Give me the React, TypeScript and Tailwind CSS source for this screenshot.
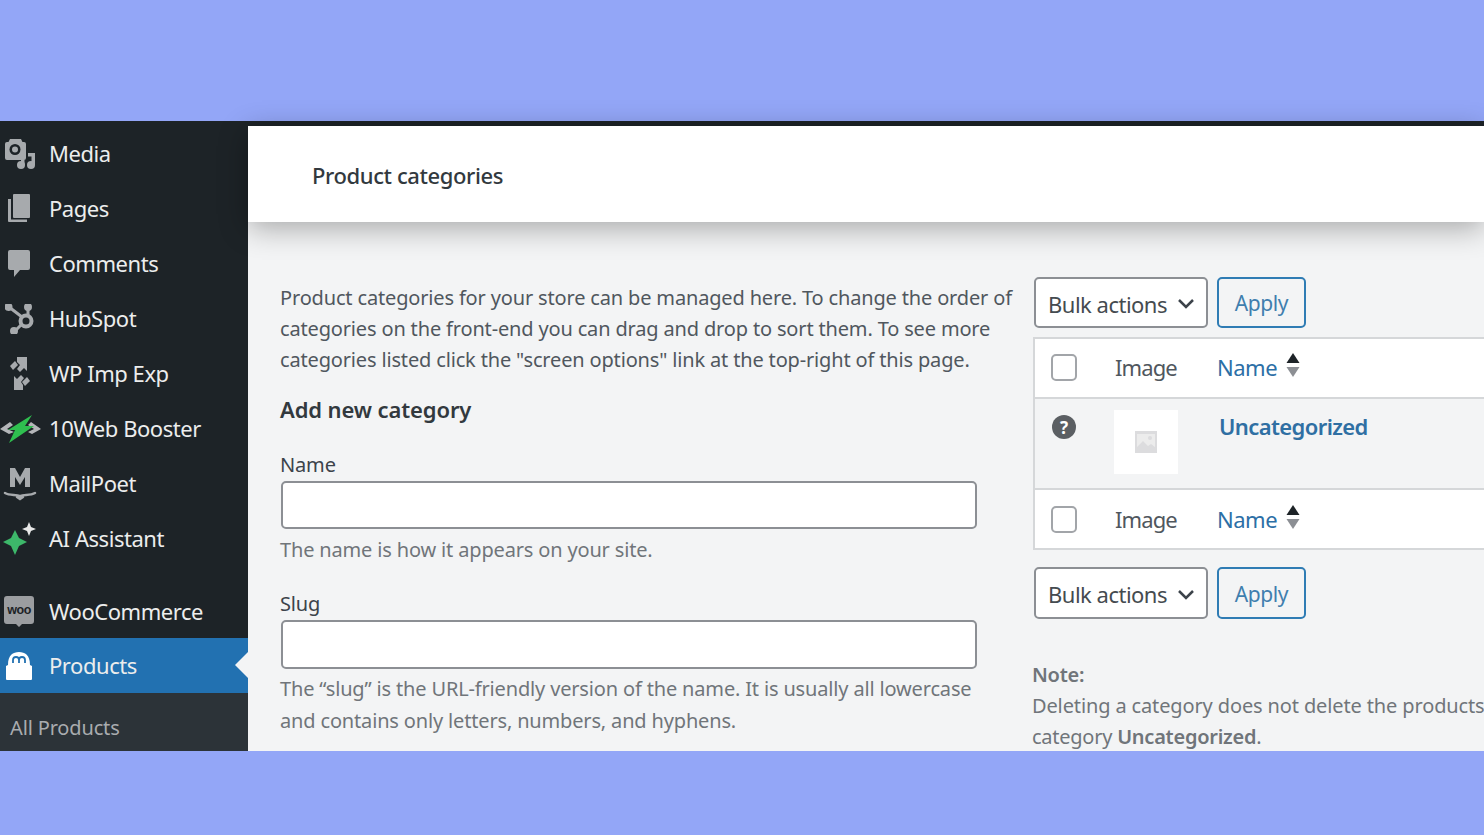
const font = "font-['Noto_Sans','Open_Sans',sans-serif]";

function MediaIcon() {
  return (
    <svg width="32" height="32" viewBox="0 0 32 32" fill="#a7aaad">
      <path d="M6 1h11l1.500 3H20a2 2 0 0 1 2 2v14a2 2 0 0 1-2 2H3a2 2 0 0 1-2-2V6a2 2 0 0 1 2-2h1.500z" />
      <circle cx="11" cy="11.500" r="5.500" fill="#1d2327" />
      <circle cx="11" cy="11.500" r="3" />
      <path d="M24 15h7v12h-3.500v-8.500H24z" />
      <circle cx="27" cy="27" r="4" />
      <path d="M17 22h3.500v5H17z" />
      <circle cx="17" cy="27" r="4" />
    </svg>
  );
}

function PagesIcon() {
  return (
    <svg width="24" height="30" viewBox="0 0 24 30" fill="#a7aaad">
      <rect x="5" y="0" width="17" height="24" rx="1" />
      <path d="M0 5h3v20.500h16V28H1a1 1 0 0 1-1-1z" />
    </svg>
  );
}

function CommentsIcon() {
  return (
    <svg width="22" height="27" viewBox="0 0 22 27" fill="#a7aaad">
      <path d="M2 0h18a2 2 0 0 1 2 2v16a2 2 0 0 1-2 2h-8l-6 7v-7H2a2 2 0 0 1-2-2V2a2 2 0 0 1 2-2z" />
    </svg>
  );
}

function HubSpotIcon() {
  return (
    <svg width="32" height="30" viewBox="0 0 32 30" fill="none" stroke="#a7aaad" strokeWidth="3">
      <circle cx="21" cy="17" r="5.500" strokeWidth="4" />
      <path d="M4 3l13 10M23 3v8M16 21l-6 6" />
      <circle cx="3.500" cy="3" r="2.500" fill="#a7aaad" />
      <circle cx="23" cy="3" r="2.500" fill="#a7aaad" />
      <circle cx="9" cy="27" r="2.500" fill="#a7aaad" />
    </svg>
  );
}

function ImpExpIcon() {
  return (
    <svg width="20" height="37" viewBox="0 0 20 37" fill="#a7aaad">
      <path d="M7 2h10v14l-3-3-4 4-3-3 3-4-3-3z" />
      <path d="M0 11l5-5 3 4-5 5z" />
      <path d="M13 35H4V21l3 3 4-4 3 3-3 4 2 3z" />
      <path d="M20 26l-5 5-3-4 5-5z" />
    </svg>
  );
}

function BoosterIcon() {
  return (
    <svg width="42" height="30" viewBox="0 0 42 30">
      <path d="M10 8 0 15l9 5 5-2-7-3 6-4zM31 8l10 7-9 5-4-2 6-3-6-4z" fill="#b4b6b9" />
      <path d="M32 1 8 16h7l-6 13 25-17h-9z" fill="#2fbf4f" />
    </svg>
  );
}

function MailPoetIcon() {
  return (
    <svg width="36" height="36" viewBox="0 0 36 36" fill="none" stroke="#a7aaad">
      <path d="M8 2h5l5 9 5-9h5v19h-5V11l-5 8-5-8v10H8z" fill="#a7aaad" stroke="none" />
      <path d="M3 27c5 3 11 1 15 3 4-2 10 0 15-3M15 31l3 2 3-2" strokeWidth="2.500" strokeLinecap="round" />
    </svg>
  );
}

function SparkIcon() {
  return (
    <svg width="36" height="36" viewBox="0 0 36 36">
      <path d="M13 9l4 8 8 4-8 4-4 9-4-9-8-4 8-4z" fill="#3db86a" />
      <path d="M27 1l2 5 5 2-5 2-2 5-2-5-5-2 5-2z" fill="#e8e8e8" />
    </svg>
  );
}

function WooIcon() {
  return (
    <svg width="32" height="33" viewBox="0 0 32 33">
      <path d="M4 1h24a3 3 0 0 1 3 3v22a3 3 0 0 1-3 3h-9l-3 3-3-3H4a3 3 0 0 1-3-3V4a3 3 0 0 1 3-3z" fill="#9b9da0" />
      <text x="16" y="19" textAnchor="middle" fontSize="12.500" fontWeight="700" fill="#1d2327" fontFamily="Liberation Sans">woo</text>
    </svg>
  );
}

function BagIcon() {
  return (
    <svg width="28" height="30" viewBox="0 0 28 30" fill="#ffffff">
      <path d="M3 14C3 4 8 1 14 1s11 3 11 13l2 1v13a1 1 0 0 1-1 1H2a1 1 0 0 1-1-1V15z" />
      <path d="M8 12V9a3 3 0 0 1 6 0v3M14 9a3 3 0 0 1 6 0v3" fill="none" stroke="#2271b1" strokeWidth="1.800" />
    </svg>
  );
}

function SortArrows() {
  return (
    <svg width="14" height="24" viewBox="0 0 14 24" className="shrink-0">
      <path d="M7 0l6.500 10H.500z" fill="#1d2327" />
      <path d="M7 24l6.500-10H.500z" fill="#8c8f94" />
    </svg>
  );
}

function Chevron() {
  return (
    <svg width="18" height="12" viewBox="0 0 18 12" fill="none" stroke="#3c434a" strokeWidth="2.500">
      <path d="M2 2l7 7 7-7" />
    </svg>
  );
}

function SideItem({ icon, label, left }: { icon: React.ReactNode; label: string; left: string }) {
  return (
    <div className="relative flex h-[55px] items-center text-[22px] tracking-[-0.45px] text-[#eceded]">
      <div className={`flex w-[49px] shrink-0 items-center justify-start overflow-visible ${left}`}>{icon}</div>
      <span>{label}</span>
    </div>
  );
}

function BulkRow({ height }: { height: string }) {
  return (
    <div className={`flex gap-[9px] ${height}`}>
      <div className="flex w-[174px] items-center justify-between rounded-[5px] border-2 border-[#8c8f94] bg-white pl-[12px] pr-[11px] pt-[3px] text-[22px] tracking-[-0.5px] text-[#454b50]">
        <span>Bulk actions</span>
        <Chevron />
      </div>
      <div className="flex w-[89px] items-center justify-center rounded-[5px] border-2 border-[#2f7cb4] bg-[#f3f4f5] pt-[3px] text-[21px] tracking-[-0.4px] text-[#3f7eae]">
        Apply
      </div>
    </div>
  );
}

function HeadRow({ top }: { top?: boolean }) {
  return (
    <div className={`flex h-[58px] items-center bg-white text-[22px] tracking-[-0.5px] ${top ? "pb-[2px]" : ""}`}>
      <div className="ml-[16px] h-[27px] w-[26px] rounded-[5px] border-2 border-[#a2a5a9] bg-white" />
      <span className="ml-[38px] w-[102px] tracking-[-0.9px] text-[#50575e]">Image</span>
      <span className="text-[#2c6fa6]">Name</span>
      <span className="ml-[9px] -mt-[5px] flex"><SortArrows /></span>
    </div>
  );
}

export default function App() {
  return (
    <div className={`flex h-[835px] w-[1484px] flex-col overflow-hidden bg-[#93a6f7] ${font}`}>
      <div className="h-[121px] shrink-0" />
      <div className="flex h-[630px] shrink-0 bg-[#f3f4f5]">
        <div className="flex w-[248px] shrink-0 flex-col overflow-hidden bg-[#1d2327] pt-[5px]">
          <SideItem icon={<MediaIcon />} label="Media" left="pl-[4px]" />
          <SideItem icon={<PagesIcon />} label="Pages" left="pl-[8px]" />
          <SideItem icon={<CommentsIcon />} label="Comments" left="pl-[8px]" />
          <SideItem icon={<HubSpotIcon />} label="HubSpot" left="pl-[5px]" />
          <SideItem icon={<ImpExpIcon />} label="WP Imp Exp" left="pl-[10px]" />
          <SideItem icon={<BoosterIcon />} label="10Web Booster" left="pl-0" />
          <SideItem icon={<MailPoetIcon />} label="MailPoet" left="pl-[2px]" />
          <SideItem icon={<SparkIcon />} label="AI Assistant" left="pl-[2px]" />
          <div className="mt-[18px] h-[54px]">
            <SideItem icon={<WooIcon />} label="WooCommerce" left="pl-[3px]" />
          </div>
          <div className="relative bg-[#2271b1]">
            <SideItem icon={<BagIcon />} label="Products" left="pl-[5px]" />
            <div className="absolute right-0 top-[14px] h-0 w-0 border-y-[13px] border-r-[13px] border-y-transparent border-r-[#f3f4f5]" />
          </div>
          <div className="flex-1 bg-[#2c3338] pl-[10px] pt-[20px] text-[20px] tracking-[-0.15px] text-[#a9acaf]">
            All Products
          </div>
        </div>

        <div className="flex min-w-0 flex-1 flex-col">
          <div className="h-[5px] shrink-0 bg-[#1d2327]" />
          <div className="z-10 flex h-[96px] shrink-0 items-center bg-white pl-[64px] pt-[2px] text-[22px] font-medium tracking-[-0.4px] text-[#32393e] shadow-[0_6px_28px_rgba(0,0,0,0.32)]">
            Product categories
          </div>
          <div className="flex min-h-0 flex-1 gap-[22px] overflow-hidden pl-[32px]">
            <div className="w-[731px] shrink-0 pt-[60px] text-[20px] tracking-[-0.16px] text-[#50575e]">
              <div className="leading-[31px]">
                <div className="whitespace-nowrap">Product categories for your store can be managed here. To change the order of</div>
                <div className="whitespace-nowrap">categories on the front-end you can drag and drop to sort them. To see more</div>
                <div className="whitespace-nowrap">categories listed click the "screen options" link at the top-right of this page.</div>
              </div>
              <div className="mt-[19px] text-[22px] font-semibold leading-[31px] tracking-[-0.12px] text-[#32393e]">Add new category</div>
              <div className="mt-[24px] leading-[31px] text-[#3c434a]">Name</div>
              <div className="ml-[1px] mt-[1px] h-[48px] w-[696px] rounded-[5px] border-2 border-[#8c8f94] bg-white" />
              <div className="mt-[5px] leading-[31px] text-[#70757a]">The name is how it appears on your site.</div>
              <div className="mt-[23px] leading-[31px] text-[#3c434a]">Slug</div>
              <div className="ml-[1px] mt-[1px] h-[49px] w-[696px] rounded-[5px] border-2 border-[#8c8f94] bg-white" />
              <div className="mt-[4px] leading-[32px] text-[#70757a]">
                <div className="whitespace-nowrap">The “slug” is the URL-friendly version of the name. It is usually all lowercase</div>
                <div className="whitespace-nowrap">and contains only letters, numbers, and hyphens.</div>
              </div>
            </div>

            <div className="min-w-0 flex-1 pt-[55px]">
              <div className="pl-[1px]"><BulkRow height="h-[51px]" /></div>
              <div className="mt-[9px] w-[600px] border-2 border-r-0 border-[#d5d7d9]">
                <HeadRow top />
                <div className="flex h-[93px] border-y-2 border-[#d5d7d9] bg-[#f3f4f5]">
                  <div className="ml-[17px] mt-[16px] flex h-[24px] w-[24px] items-center justify-center rounded-full bg-[#5b5f63] text-[17px] font-bold leading-none text-white">?</div>
                  <div className="ml-[38px] mt-[11px] flex h-[64px] w-[64px] items-center justify-center bg-white">
                    <svg width="24" height="24" viewBox="0 0 24 24" fill="#dcdcde">
                      <path d="M1 1h22v22H1z" />
                      <path d="M3 17l6-6 5 5 3-2 4 3V4H3z" fill="#ececec" />
                      <circle cx="16" cy="8" r="2" />
                    </svg>
                  </div>
                  <div className="ml-[41px] mt-[12px] text-[22px] font-semibold leading-[31px] tracking-[-0.6px] text-[#2f6fa3]">Uncategorized</div>
                </div>
                <HeadRow />
              </div>
              <div className="mt-[17px] pl-[1px]"><BulkRow height="h-[52px]" /></div>
              <div className="-ml-px mt-[40px] whitespace-nowrap text-[20px] leading-[31px] tracking-[-0.25px] text-[#70757a]">
                <div className="font-semibold">Note:</div>
                <div className="tracking-[-0.13px]">Deleting a category does not delete the products</div>
                <div>category <b className="font-semibold">Uncategorized</b>.</div>
              </div>
            </div>
          </div>
        </div>
      </div>
    </div>
  );
}
